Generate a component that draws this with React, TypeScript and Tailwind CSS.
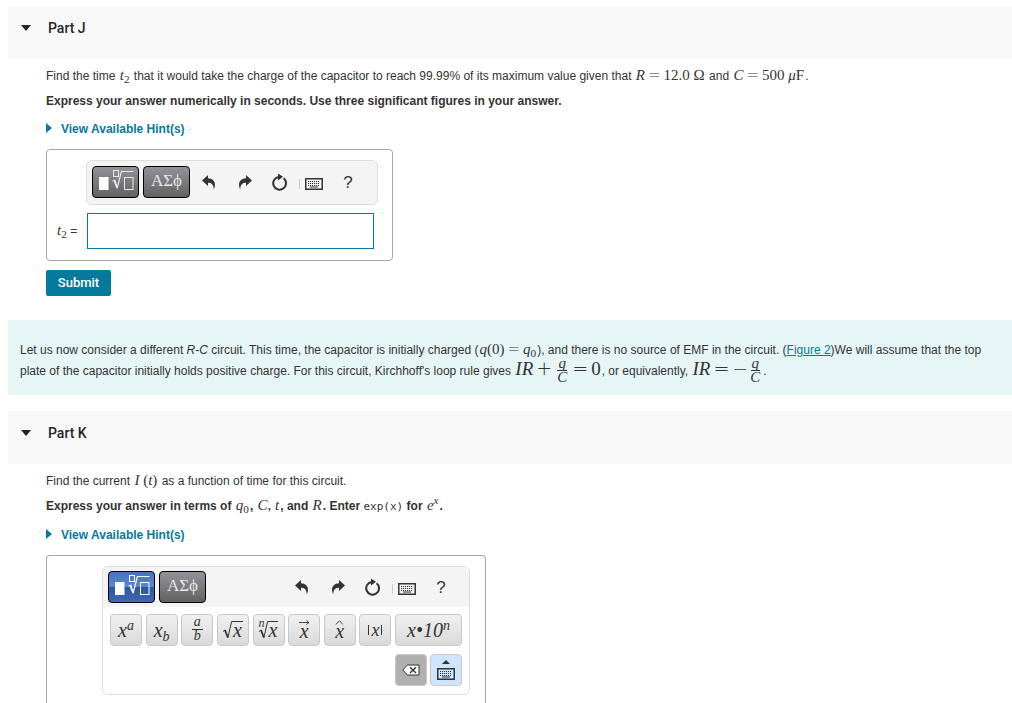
import type { ReactNode } from "react";
import clsx from "clsx";

const M = ({ children, className }: { children: ReactNode; className?: string }) => (
  <span
    className={clsx(
      "font-['Liberation_Serif',serif] font-normal whitespace-nowrap",
      className ?? "mx-px text-[15px] leading-none"
    )}
  >
    {children}
  </span>
);

const Eq = ({ children = "=" }: { children?: ReactNode }) => (
  <span className="px-[3px] font-['DejaVu_Sans',sans-serif] font-extralight">{children}</span>
);

const Fraction = ({ top, bottom }: { top: string; bottom: string }) => (
  <span className="mx-0.5 -my-3 inline-flex flex-col items-center align-middle text-[15px] leading-[13px] italic">
    <span className="border-b border-[#333] px-px">{top}</span>
    <span>{bottom}</span>
  </span>
);

const Undo = ({ flip }: { flip?: boolean }) => (
  <svg
    viewBox="0 0 14 15"
    className={clsx("h-[15px] w-3.5 fill-[#333]", flip && "-scale-x-100")}
  >
    <path d="M6 0 0 5.5 6 11V7.8C9.4 7.8 11.6 9.4 11.8 14.6 14.6 8.6 12.4 3.4 6 3.2Z" />
  </svg>
);

const Reset = () => (
  <svg viewBox="0 0 16 18" className="h-[18px] w-4">
    <path
      d="M12.6 5.2A6.4 6.4 0 1 1 7.6 3.9"
      fill="none"
      stroke="#333"
      strokeWidth="2"
    />
    <path d="M7 .5 12 3.8 7 7.5Z" fill="#333" />
  </svg>
);

const Keyboard = () => (
  <svg viewBox="0 0 18 12" className="h-3 w-[18px]">
    <rect x=".75" y=".75" width="16.5" height="10.5" fill="none" stroke="#333" strokeWidth="1.5" />
    <path
      d="M3 3.5H15M3 5.5H15M3 7.5H15"
      fill="none"
      stroke="#333"
      strokeWidth="1"
      strokeDasharray="1.1 .9"
    />
    <path d="M5 9H13" stroke="#333" strokeWidth="1" />
  </svg>
);

const Template = () => (
  <svg viewBox="0 0 36 22" className="h-[22px] w-9" fill="none" stroke="currentColor">
    <rect x="1" y="8" width="9.5" height="13" fill="#fff" stroke="none" />
    <rect x="15.5" y="1.5" width="5" height="6" />
    <path d="M14.5 12 16.5 11" />
    <path d="M16.3 11 19 18.5" strokeWidth="2" />
    <path d="M19 19.5 23.4 2.5H35.5" strokeWidth="1.2" />
    <rect x="26.5" y="8.5" width="8.5" height="12" />
  </svg>
);

const Radical = ({ index }: { index?: string }) => (
  <span className="relative flex items-start">
    {index && <span className="absolute -top-1 left-0 text-[12px] leading-3">{index}</span>}
    <svg viewBox="0 0 9 18" className="h-[18px] w-[9px]" fill="none" stroke="#333">
      <path d="M0 10.5 2.2 9" />
      <path d="M2 9 4.8 16.5" strokeWidth="1.8" />
      <path d="M4.8 17 8.6.5H9" />
    </svg>
    <span className="border-t border-[#333] px-px leading-4">x</span>
  </span>
);

const Arrow = () => (
  <svg viewBox="0 0 11 5" className="h-[5px] w-[11px]" fill="none" stroke="#333" strokeWidth=".9">
    <path d="M0 2.5H10M7.5.5 10 2.5 7.5 4.5" />
  </svg>
);

const Hat = () => (
  <svg viewBox="0 0 9 5" className="h-[5px] w-[9px]" fill="none" stroke="#333" strokeWidth=".9">
    <path d="M1 4.5 4.5.8 8 4.5" />
  </svg>
);

const Tab = ({ children, label, active }: { children: ReactNode; label: string; active?: boolean }) => (
  <button
    aria-label={label}
    className={clsx(
      "flex h-8 w-[47px] items-center justify-center rounded border border-black pb-1 font-['Liberation_Serif',serif] text-[17px] leading-none",
      active
        ? "bg-[linear-gradient(#4574bd,#5c86d0_50%,#2b579f_50%,#3d69b3)] text-white"
        : "bg-[linear-gradient(#93929a,#626262)] text-[#e8e8e8]"
    )}
  >
    {children}
  </button>
);

const Actions = () => (
  <div className="mr-1 ml-px flex h-8 items-center">
    <button aria-label="undo" className="flex w-9 justify-center">
      <Undo />
    </button>
    <button aria-label="redo" className="flex w-9 justify-center">
      <Undo flip />
    </button>
    <button aria-label="reset" className="flex w-8 justify-center">
      <Reset />
    </button>
    <span className="mt-1 ml-1 h-2.5 w-px bg-[#ccc]" />
    <button aria-label="keyboard shortcuts" className="mt-1 ml-1 flex w-5 justify-center">
      <Keyboard />
    </button>
    <button aria-label="help" className="w-12 text-center text-[17px] leading-none">
      ?
    </button>
  </div>
);

const Key = ({ children, label }: { children: ReactNode; label: string }) => (
  <button
    aria-label={label}
    className="flex h-8 w-8 items-center justify-center rounded border border-[#c8c8c8] bg-linear-to-b from-[#f0f0f0] to-[#dadada]"
  >
    {children}
  </button>
);

const PartHeader = ({ title }: { title: string }) => (
  <header className="h-[53px] bg-[#f8f8f8] px-3 pt-3">
    <button className="flex h-5 items-center font-['Roboto',sans-serif] text-[14px] font-medium text-[#252525]">
      <svg viewBox="0 0 10 6" className="mr-[17px] ml-px h-1.5 w-2.5 fill-[#252525]">
        <path d="M0 0H10L5 6Z" />
      </svg>
      {title}
    </button>
  </header>
);

const Hints = () => (
  <a href="#hints" className="flex h-5 items-center text-[12px] font-bold text-[#047a9c]">
    <svg viewBox="0 0 6 10" className="mr-[9px] mb-0.5 h-2.5 w-1.5 fill-[#047a9c]">
      <path d="M0 0 6 5 0 10Z" />
    </svg>
    View Available Hint(s)
  </a>
);

const App = () => {
  return (
    <main className="flex h-screen flex-col overflow-hidden bg-white pt-1.5 pl-2 font-['Liberation_Sans',Arial,sans-serif] text-[12px] leading-5 text-[#333]">
      <PartHeader title="Part J" />
      <section className="pt-[7px] pl-[38px]">
        <p className="h-5">
          Find the time{" "}
          <M>
            <i>t</i>
            <sub>2</sub>
          </M>{" "}
          that it would take the charge of the capacitor to reach 99.99% of its maximum value given that{" "}
          <M>
            <i>R</i>
            <Eq />
            12.0 Ω
          </M>{" "}
          and{" "}
          <M>
            <i>C</i>
            <Eq />
            500 <i>μ</i>F
          </M>
          .
        </p>
        <p className="mt-[5px] h-5 font-bold">
          Express your answer numerically in seconds. Use three significant figures in your answer.
        </p>
        <div className="mt-2">
          <Hints />
        </div>
        <div className="mt-2.5 w-[347px] rounded border border-[#a6a6a6] pt-2.5 pr-3.5 pb-[11px] pl-2.5">
          <div className="ml-[29px] flex h-[45px] items-start rounded-md border border-[#ddd] bg-[#f4f4f4] pt-[5px] pl-[5px]">
            <div className="flex gap-1">
              <Tab label="templates">
                <Template />
              </Tab>
              <Tab label="symbols">ΑΣϕ</Tab>
            </div>
            <Actions />
          </div>
          <div className="mt-2 flex items-center">
            <label htmlFor="answer-j" className="w-[30px] whitespace-nowrap">
              <M className="text-[15px] leading-none">
                <i>t</i>
                <sub>2</sub>
              </M>{" "}
              =
            </label>
            <input id="answer-j" className="mr-1 h-9 min-w-0 flex-1 border border-[#047a9c] px-2" />
          </div>
        </div>
        <button className="mt-[9px] h-[26px] w-[65px] rounded-xs bg-[#047a9c] pb-px font-['Roboto',sans-serif] text-[13px] font-medium text-white">
          Submit
        </button>
      </section>

      <section className="mt-6 bg-[#e6f6f7] px-3 pt-5 pb-[13px] text-[12px] leading-[21px]">
        <p>
          Let us now consider a different <em>R</em>-<em>C</em> circuit. This time, the capacitor is initially
          charged (
          <M>
            <i>q</i>(0)
            <Eq />
            <i>q</i>
            <sub>0</sub>
          </M>
          ), and there is no source of EMF in the circuit. (
          <a href="#figure2" className="text-[#047a9c] underline">
            Figure 2
          </a>
          )We will assume that the top plate of the capacitor initially holds positive charge. For this circuit,
          Kirchhoff's loop rule gives{" "}
          <M className="mx-px text-[19px] leading-3">
            <i>IR</i>
            <Eq>+</Eq>
            <Fraction top="q" bottom="C" />
            <Eq />0
          </M>
          , or equivalently,{" "}
          <M className="mx-px text-[19px] leading-3">
            <i>IR</i>
            <Eq />
            <span className="font-['DejaVu_Sans',sans-serif] font-extralight">−</span>
            <Fraction top="q" bottom="C" />
          </M>
          .
        </p>
      </section>

      <div className="mt-4">
        <PartHeader title="Part K" />
      </div>
      <section className="flex flex-1 flex-col pt-[7px] pl-[38px]">
        <p className="h-5">
          Find the current{" "}
          <M>
            <i>I</i> (<i>t</i>)
          </M>{" "}
          as a function of time for this circuit.
        </p>
        <p className="mt-[5px] h-5 font-bold">
          Express your answer in terms of{" "}
          <M>
            <i>q</i>
            <sub>0</sub>
          </M>
          ,{" "}
          <M>
            <i>C</i>, <i>t</i>
          </M>
          , and{" "}
          <M>
            <i>R</i>
          </M>
          . Enter <code className="font-['DejaVu_Sans_Mono',monospace] text-[11px] font-normal">exp(x)</code> for{" "}
          <M>
            <i>
              e<sup>x</sup>
            </i>
          </M>
          .
        </p>
        <div className="mt-[9px]">
          <Hints />
        </div>
        <div className="mt-2.5 w-[440px] flex-1 rounded-t border border-b-0 border-[#a6a6a6] pt-2.5 pr-[15px] pl-[55px]">
          <div className="overflow-hidden rounded-md border border-[#ddd]">
            <div className="flex h-10 items-center justify-between bg-[#f4f4f4] pl-[5px]">
              <div className="flex gap-1">
                <Tab label="templates" active>
                  <Template />
                </Tab>
                <Tab label="symbols">ΑΣϕ</Tab>
              </div>
              <Actions />
            </div>
            <div className="px-[7px] pt-[7px] pb-2 font-['Liberation_Serif',serif] text-[20px] leading-5 text-[#333] italic">
              <div className="flex justify-between">
                <Key label="superscript">
                  <span>
                    x<sup className="text-[14px]">a</sup>
                  </span>
                </Key>
                <Key label="subscript">
                  <span>
                    x<sub className="text-[14px]">b</sub>
                  </span>
                </Key>
                <Key label="fraction">
                  <span className="flex flex-col items-center pb-0.5 text-[14px] leading-3">
                    <span className="border-b border-[#333] px-0.5 pb-px">a</span>
                    <span>b</span>
                  </span>
                </Key>
                <Key label="square root">
                  <Radical />
                </Key>
                <Key label="nth root">
                  <Radical index="n" />
                </Key>
                <Key label="vector">
                  <span className="flex flex-col items-center pb-1 leading-3">
                    <Arrow />x
                  </span>
                </Key>
                <Key label="unit vector">
                  <span className="flex flex-col items-center pb-1 leading-3">
                    <Hat />x
                  </span>
                </Key>
                <Key label="absolute value">
                  <span className="border-x border-[#333] px-0.5 text-[18px] leading-[10px]">x</span>
                </Key>
                <button className="h-8 w-[67px] rounded border border-[#c8c8c8] bg-linear-to-b from-[#f0f0f0] to-[#dadada]">
                  x•10<sup className="text-[14px]">n</sup>
                </button>
              </div>
              <div className="mt-2 flex justify-end gap-[3px]">
                <button
                  aria-label="delete"
                  className="flex h-8 w-8 items-center justify-center rounded border border-[#c8c8c8] bg-[#b0b0b0]"
                >
                  <svg viewBox="0 0 18 12" className="h-3 w-[18px]">
                    <path d="M.8 6 5.5 1H17V11H5.5Z" fill="#fff" stroke="#333" />
                    <path d="M8 3.2 14 9M14 3.2 8 9" stroke="#333" strokeWidth="1.4" />
                  </svg>
                </button>
                <button
                  aria-label="hide keypad"
                  className="flex h-8 w-8 flex-col items-center justify-center gap-1 rounded border border-[#c8c8c8] bg-[#cfe5ff]"
                >
                  <svg viewBox="0 0 8 4" className="h-1 w-2 fill-[#333]">
                    <path d="M0 4 4 0 8 4Z" />
                  </svg>
                  <Keyboard />
                </button>
              </div>
            </div>
          </div>
        </div>
      </section>
    </main>
  );
};

export default App;
